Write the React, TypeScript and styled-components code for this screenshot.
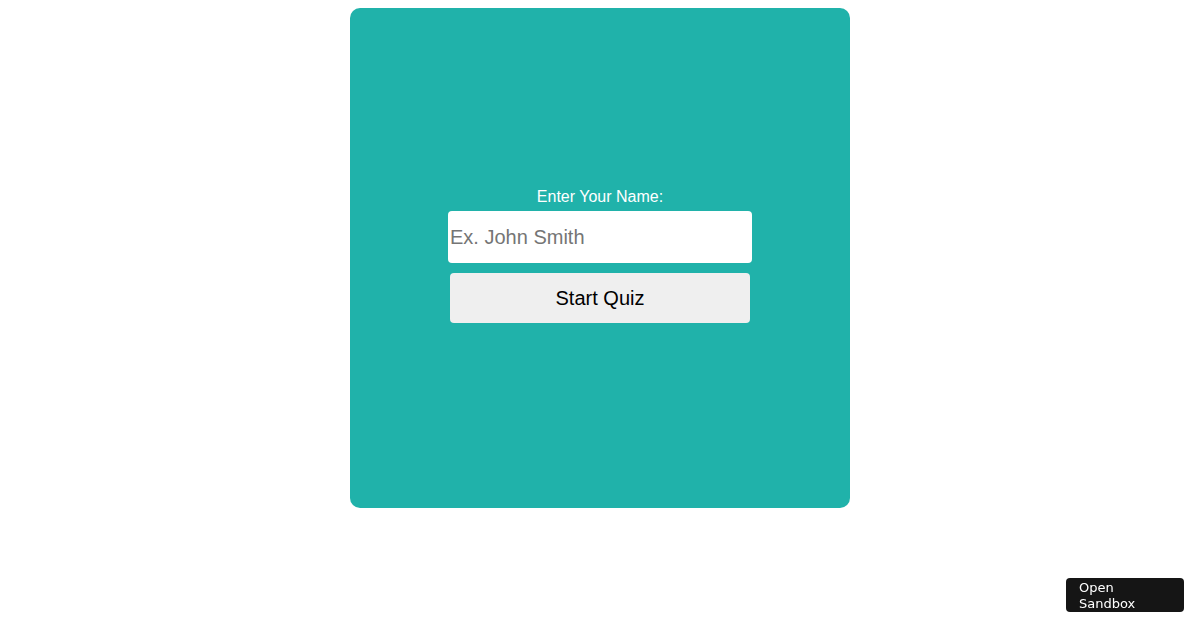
import React from "react";
import styled, { createGlobalStyle } from "styled-components";

const Global = createGlobalStyle`
  html, body { margin: 0; padding: 0; background: #fff; }
  body { padding: 8px; font-family: "Liberation Sans", Arial, sans-serif; }
`;

const Page = styled.div`
  display: flex;
  justify-content: center;
`;

const Card = styled.div`
  width: 500px;
  height: 500px;
  background: #20b2aa;
  border-radius: 10px;
  display: flex;
  flex-direction: column;
  align-items: center;
  justify-content: center;
`;

const Form = styled.div`
  display: flex;
  flex-direction: column;
  align-items: center;
  margin-top: -5px;
`;

const Label = styled.label`
  color: #fff;
  font-size: 16px;
  line-height: 18px;
  margin-bottom: 5px;
`;

const Input = styled.input`
  box-sizing: border-box;
  width: 304px;
  height: 52px;
  border: none;
  border-radius: 4px;
  padding: 0 2px;
  font-family: "Liberation Sans", Arial, sans-serif;
  font-size: 20px;
  color: #000;
  background: #fff;
  outline: none;
  &::placeholder { color: #757575; }
`;

const Button = styled.button`
  box-sizing: border-box;
  width: 300px;
  height: 50px;
  margin-top: 10px;
  border: none;
  border-radius: 4px;
  background: #efefef;
  color: #000;
  font-family: "Liberation Sans", Arial, sans-serif;
  font-size: 20px;
  cursor: pointer;
`;

const Sandbox = styled.a`
  position: fixed;
  right: 16px;
  bottom: 18px;
  box-sizing: border-box;
  width: 118px;
  height: 34px;
  padding: 2px 13px 0;
  background: #151515;
  border-radius: 4px;
  color: #fff;
  font-family: "DejaVu Sans", sans-serif;
  font-size: 13px;
  line-height: 16px;
  text-decoration: none;
`;

export default function App() {
  return (
    <>
      <Global />
      <Page>
        <Card>
          <Form>
            <Label htmlFor="name">Enter Your Name:</Label>
            <Input id="name" placeholder="Ex. John Smith" />
            <Button>Start Quiz</Button>
          </Form>
        </Card>
      </Page>
      <Sandbox href="#">Open<br />Sandbox</Sandbox>
    </>
  );
}
